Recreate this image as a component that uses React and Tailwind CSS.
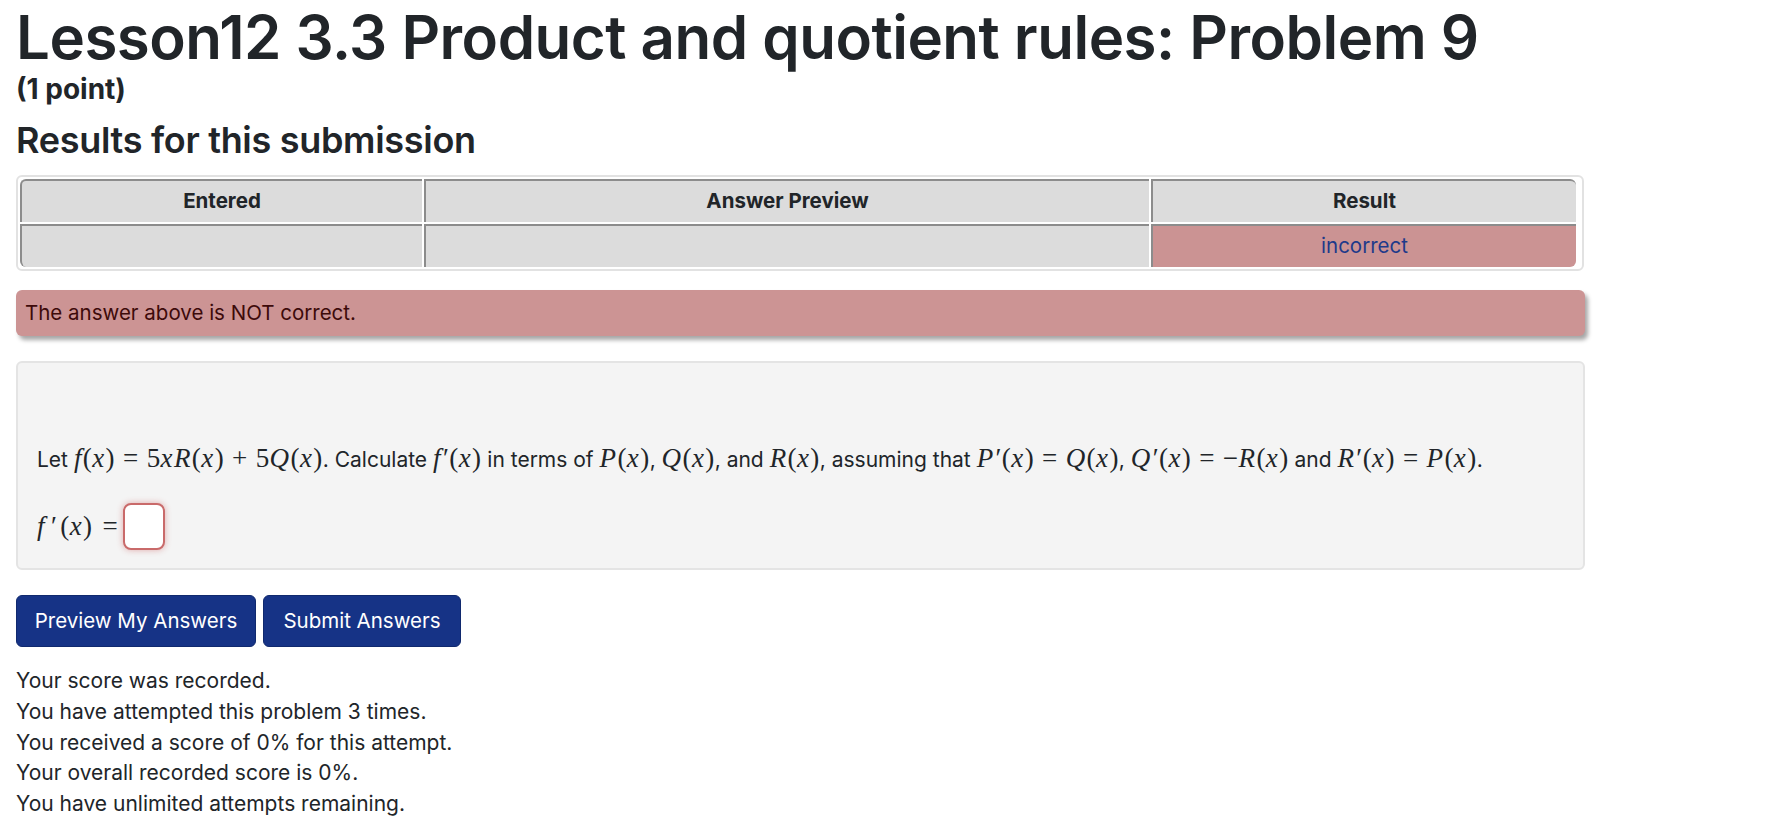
import React from 'react';

const sans = "font-['Inter','Liberation_Sans',sans-serif]";

function M({ children }) {
  return <span className="font-['Liberation_Serif',serif] text-[27px] tracking-[0.4px] whitespace-nowrap">{children}</span>;
}

function V({ children }) {
  return <i className="pr-[1px]">{children}</i>;
}

function Op({ children }) {
  return <span className="mx-[8px]">{children}</span>;
}

function Fx({ name, prime }) {
  return (
    <>
      <V>{name}</V>
      {prime && <span className="ml-[1px]">′</span>}(<V>x</V>)
    </>
  );
}

const cell = 'bg-[#dcdcdc] border-t-2 border-l-2 border-[#8c8c8c] h-[43px] text-center align-middle';

export default function App() {
  return (
    <div className={`${sans} text-[#212529] bg-white min-h-screen px-[16px]`}>
      <h1 className="text-[60px] font-semibold leading-[74px] tracking-[-0.5px]">
        Lesson12 3.3 Product and quotient rules: Problem 9
      </h1>
      <div className="text-[28px] font-bold leading-[30px]">(1 point)</div>
      <h2 className="text-[36px] font-semibold leading-[42px] mt-[15px] tracking-[-0.3px]">Results for this submission</h2>

      <div className="w-[1568px] mt-[14px] border-2 border-[#e2e2e2] rounded-md p-[2px]">
        <table className="w-full border-separate border-spacing-[2px] -m-[2px] text-[20.5px]">
          <thead>
            <tr>
              <th className={`${cell} w-[402px] rounded-tl-md font-bold`}>Entered</th>
              <th className={`${cell} w-[725px] font-bold`}>Answer Preview</th>
              <th className={`${cell} rounded-tr-md font-bold`}>Result</th>
            </tr>
          </thead>
          <tbody>
            <tr>
              <td className={`${cell} rounded-bl-md`}></td>
              <td className={cell}></td>
              <td className={`${cell} !bg-[#cb9393] rounded-br-md text-[#1e3a8a]`}>incorrect</td>
            </tr>
          </tbody>
        </table>
      </div>

      <div className="w-[1569px] mt-[19px] h-[46px] flex items-center px-[9px] bg-[#cc9494] rounded-md shadow-[3px_4px_4px_rgba(0,0,0,0.35)] text-[20.5px] text-[#3d0a0a]">
        The answer above is NOT correct.
      </div>

      <div className="w-[1569px] mt-[25px] h-[209px] bg-[#f4f4f4] border-2 border-[#e4e4e4] rounded-md px-[19px] pt-[79px] text-[21px]">
        <p className="leading-[32px]">
          Let <M><Fx name="f" /><Op>=</Op>5<V>x</V><Fx name="R" /><Op>+</Op>5<Fx name="Q" /></M>. Calculate{' '}
          <M><Fx name="f" prime /></M> in terms of <M><Fx name="P" /></M>, <M><Fx name="Q" /></M>, and{' '}
          <M><Fx name="R" /></M>, assuming that <M><Fx name="P" prime /><Op>=</Op><Fx name="Q" /></M>,{' '}
          <M><Fx name="Q" prime /><Op>=</Op>−<Fx name="R" /></M> and <M><Fx name="R" prime /><Op>=</Op><Fx name="P" /></M>.
        </p>
        <div className="flex items-center mt-[27px]">
          <M>
            <V>f</V>
            <span className="ml-[5px] mr-[3px]">′</span>(<V>x</V>)
            <span className="ml-[10px] mr-[5px]">=</span>
          </M>
          <div className="w-[42px] h-[47px] bg-white border-2 border-[#c96a6a] rounded-lg shadow-[0_0_6px_rgba(200,80,80,0.45)]"></div>
        </div>
      </div>

      <div className="flex gap-[7px] mt-[25px]">
        <button className="w-[240px] h-[52px] bg-[#163386] border border-[#10296e] rounded-md text-white text-[20.5px]">
          Preview My Answers
        </button>
        <button className="w-[198px] h-[52px] bg-[#163386] border border-[#10296e] rounded-md text-white text-[20.5px]">
          Submit Answers
        </button>
      </div>

      <div className="mt-[19px] text-[21px] leading-[30.8px]">
        <div>Your score was recorded.</div>
        <div>You have attempted this problem 3 times.</div>
        <div>You received a score of 0% for this attempt.</div>
        <div>Your overall recorded score is 0%.</div>
        <div>You have unlimited attempts remaining.</div>
      </div>
    </div>
  );
}
